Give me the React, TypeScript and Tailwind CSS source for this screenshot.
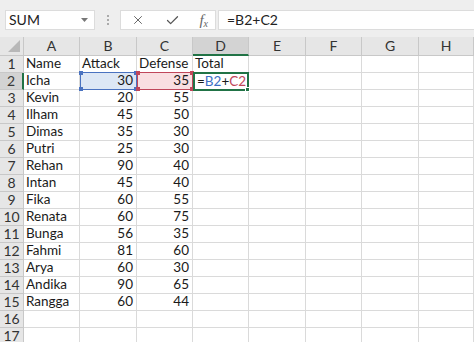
import { X, Check } from 'lucide-react';

type Row = { name: string; attack: number; defense: number };

const rows: Row[] = [
  { name: 'Icha', attack: 30, defense: 35 },
  { name: 'Kevin', attack: 20, defense: 55 },
  { name: 'Ilham', attack: 45, defense: 50 },
  { name: 'Dimas', attack: 35, defense: 30 },
  { name: 'Putri', attack: 25, defense: 30 },
  { name: 'Rehan', attack: 90, defense: 40 },
  { name: 'Intan', attack: 45, defense: 40 },
  { name: 'Fika', attack: 60, defense: 55 },
  { name: 'Renata', attack: 60, defense: 75 },
  { name: 'Bunga', attack: 56, defense: 35 },
  { name: 'Fahmi', attack: 81, defense: 60 },
  { name: 'Arya', attack: 60, defense: 30 },
  { name: 'Andika', attack: 90, defense: 65 },
  { name: 'Rangga', attack: 60, defense: 44 },
];

const colWidths = ['w-[56px]', 'w-[57px]', 'w-[56px]', 'w-[56px]', 'w-[57px]', 'w-[56px]', 'w-[57px]', 'flex-1'];
const letters = ['A', 'B', 'C', 'D', 'E', 'F', 'G', 'H'];

function Handle({ pos, color }: { pos: string; color: string }) {
  return <span className={`absolute w-[4px] h-[4px] ${pos} ${color}`} />;
}

function Cell({ i, children, align = 'left' }: { i: number; children?: React.ReactNode; align?: 'left' | 'right' }) {
  return (
    <div
      className={`${colWidths[i]} shrink-0 h-full border-r border-b border-[#dadada] flex items-center px-[2px] ${
        align === 'right' ? 'justify-end pr-[3px]' : ''
      }`}
    >
      {children}
    </div>
  );
}

function RowHeader({ n, active }: { n: number; active?: boolean }) {
  return (
    <div
      className={`w-[24px] shrink-0 h-full flex items-center justify-center border-b border-[#c8c8c8] text-[14px] ${
        active ? 'bg-[#d3d3d3] border-r-2 border-r-[#217346] text-[#3a3a3a]' : 'bg-[#e6e6e6] border-r border-r-[#c8c8c8] text-[#333]'
      }`}
    >
      {n}
    </div>
  );
}

export default function App() {
  return (
    <div className="w-[474px] h-[342px] overflow-hidden bg-white font-['Lato',sans-serif] text-[13.5px] text-[#1a1a1a] leading-none">
      {/* formula bar */}
      <div className="h-[37px] bg-[#eeeeee] flex items-start pt-[10px]">
        <div className="ml-[5px] w-[90px] h-[20px] bg-white border border-[#dcdcdc] flex items-center pl-[3px] pr-[6px] justify-between">
          <span className="text-[#222] text-[14px]">SUM</span>
          <svg width="7" height="4" viewBox="0 0 7 4">
            <polygon points="0,0 7,0 3.5,4" fill="#777" />
          </svg>
        </div>
        <div className="w-[25px] h-[20px] flex flex-col items-center justify-center gap-[2px]">
          <span className="w-[2px] h-[2px] bg-[#aaa]" />
          <span className="w-[2px] h-[2px] bg-[#aaa]" />
          <span className="w-[2px] h-[2px] bg-[#aaa]" />
        </div>
        <div className="w-[96px] h-[20px] bg-white border border-[#dcdcdc] flex items-center justify-between pl-[10px] pr-[7px]">
          <X size={14} strokeWidth={1.5} className="text-[#555]" />
          <Check size={15} strokeWidth={2} className="text-[#555]" />
          <span className="font-['Liberation_Serif',serif] italic text-[15px] text-[#666]">
            f<sub className="text-[10px]">x</sub>
          </span>
        </div>
        <div className="ml-[2px] flex-1 h-[20px] bg-white border-y border-l border-[#dcdcdc] flex items-center pl-[8px] text-[#222] text-[14px]">
          =B2+C2
        </div>
      </div>

      {/* column headers */}
      <div className="h-[19px] flex text-[#333] text-[14px]">
        <div className="w-[24px] shrink-0 h-full bg-[#e6e6e6] border-r border-b border-[#c8c8c8] relative">
          <svg className="absolute left-0 top-0" width="23" height="18" viewBox="0 0 23 18">
            <polygon points="8,15 20,15 20,3" fill="#b8b8b8" />
          </svg>
        </div>
        {letters.map((l, i) => (
          <div
            key={l}
            className={`${colWidths[i]} shrink-0 h-full flex items-center justify-center border-r border-[#c8c8c8] ${
              i === 3 ? 'bg-[#d3d3d3] border-b-2 border-b-[#217346]' : 'bg-[#e6e6e6] border-b border-b-[#c8c8c8]'
            }`}
          >
            {l}
          </div>
        ))}
      </div>

      {/* row 1 */}
      <div className="h-[17px] flex">
        <RowHeader n={1} />
        <Cell i={0}>Name</Cell>
        <Cell i={1}>Attack</Cell>
        <Cell i={2}>Defense</Cell>
        <Cell i={3}>Total</Cell>
        {[4, 5, 6, 7].map((i) => (
          <Cell key={i} i={i} />
        ))}
      </div>

      {/* row 2 with formula references */}
      <div className="h-[17px] flex">
        <RowHeader n={2} active />
        <Cell i={0}>{rows[0].name}</Cell>
        <div className="w-[57px] shrink-0 relative bg-[#dde7f5] border border-[#4a72c0] flex items-center justify-end pr-[3px] -mt-px h-[18px]">
          {rows[0].attack}
          <Handle pos="-left-[2px] -top-[2px]" color="bg-[#4a72c0]" />
          <Handle pos="-right-[2px] -top-[2px]" color="bg-[#4a72c0]" />
          <Handle pos="-left-[2px] -bottom-[2px]" color="bg-[#4a72c0]" />
          <Handle pos="-right-[2px] -bottom-[2px]" color="bg-[#4a72c0]" />
        </div>
        <div className="w-[56px] shrink-0 relative bg-[#f9dfe1] border border-[#c0475a] flex items-center justify-end pr-[3px] -mt-px h-[18px]">
          {rows[0].defense}
          <Handle pos="-left-[2px] -top-[2px]" color="bg-[#c0475a]" />
          <Handle pos="-right-[2px] -top-[2px]" color="bg-[#c0475a]" />
          <Handle pos="-left-[2px] -bottom-[2px]" color="bg-[#c0475a]" />
          <Handle pos="-right-[2px] -bottom-[2px]" color="bg-[#c0475a]" />
        </div>
        <div className="w-[56px] shrink-0 relative border-2 border-[#217346] -mt-px h-[19px] flex items-center pl-[2px]">
          <span>=</span>
          <span className="text-[#3c6fc4]">B2</span>
          <span>+</span>
          <span className="text-[#c0475a]">C2</span>
          <span className="w-px h-[14px] bg-[#222] ml-[1px]" />
          <span className="absolute -right-[3px] -bottom-[3px] w-[5px] h-[5px] bg-[#217346] border border-white" />
        </div>
        {[4, 5, 6, 7].map((i) => (
          <Cell key={i} i={i} />
        ))}
      </div>

      {rows.slice(1).map((r, idx) => (
        <div key={r.name} className="h-[17px] flex">
          <RowHeader n={idx + 3} />
          <Cell i={0}>{r.name}</Cell>
          <Cell i={1} align="right">
            {r.attack}
          </Cell>
          <Cell i={2} align="right">
            {r.defense}
          </Cell>
          {[3, 4, 5, 6, 7].map((i) => (
            <Cell key={i} i={i} />
          ))}
        </div>
      ))}

      {[16, 17].map((n) => (
        <div key={n} className="h-[17px] flex">
          <RowHeader n={n} />
          {[0, 1, 2, 3, 4, 5, 6, 7].map((i) => (
            <Cell key={i} i={i} />
          ))}
        </div>
      ))}
    </div>
  );
}
